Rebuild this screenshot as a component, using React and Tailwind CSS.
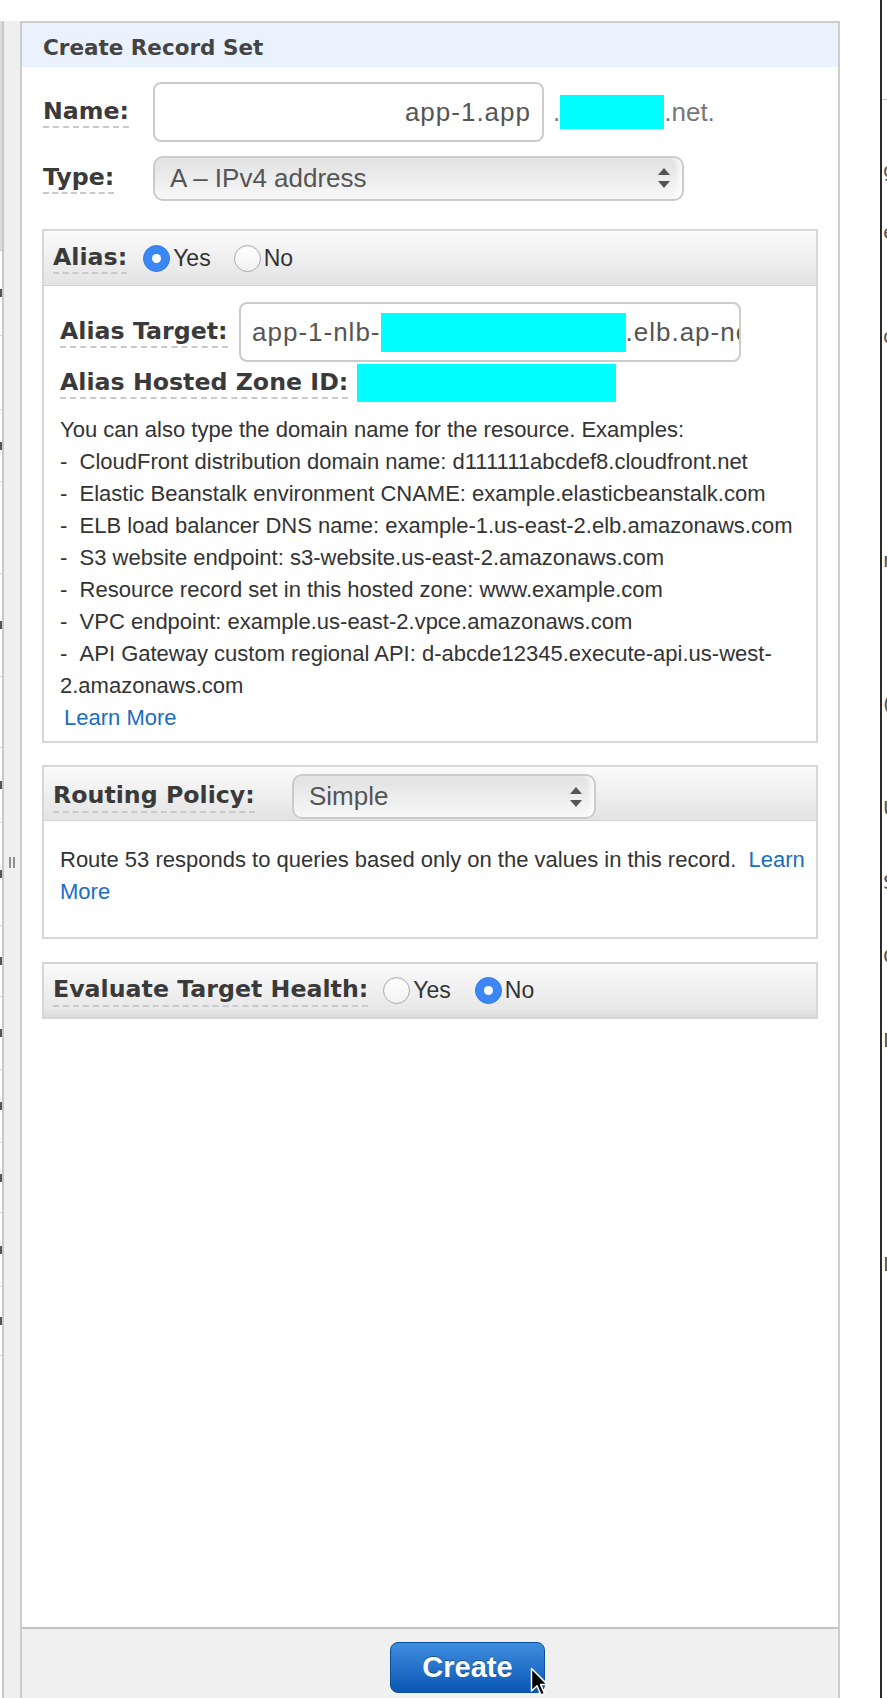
import React from "react";

function Label({ children }) {
  return (
    <span className="inline-block shrink-0 mt-[4px] whitespace-nowrap font-['DejaVu_Sans',Verdana,sans-serif] font-bold text-[23.7px] leading-none text-[#3a3a3a] pb-[3px] border-b-2 border-dashed border-[#c9c9c9]">
      {children}
    </span>
  );
}

function Radio({ checked }) {
  return checked ? (
    <span className="inline-flex shrink-0 w-[27px] h-[27px] rounded-full bg-[#3b87f5] border border-[#2f77e4] items-center justify-center">
      <span className="w-[9px] h-[9px] rounded-full bg-white" />
    </span>
  ) : (
    <span className="inline-block shrink-0 w-[27px] h-[27px] rounded-full bg-[linear-gradient(#ffffff,#f2f2f2)] border-[1.5px] border-[#ababab] shadow-[inset_0_1px_1px_rgba(0,0,0,0.08)]" />
  );
}

function Arrows() {
  return (
    <svg width="12" height="20" viewBox="0 0 12 20" className="shrink-0">
      <path d="M6 0 L12 7 L0 7 Z" fill="#555555" />
      <path d="M0 13 L12 13 L6 20 Z" fill="#555555" />
    </svg>
  );
}

function Select({ w, text }) {
  return (
    <div
      className={
        w +
        " h-[45px] shrink-0 rounded-[10px] border-2 border-[#cbcbcb] bg-[linear-gradient(#e1e1e1,#f8f8f8)] shadow-[inset_-6px_0_6px_-3px_#ffffff] flex items-center justify-between pl-[15px] pr-[12px] text-[26px] text-[#555555]"
      }
    >
      <span>{text}</span>
      <Arrows />
    </div>
  );
}

const HeaderBand =
  "bg-[linear-gradient(#fbfbfb,#e3e3e3)] border-b border-[#d2d2d2]";

function LeftStrip() {
  const rows = [
    { h: "h-[85px]", mark: true },
    { h: "h-[74px]", mark: false },
    { h: "h-[72px]", mark: true },
    { h: "h-[92px]", mark: false },
    { h: "h-[103px]", mark: true },
    { h: "h-[71px]", mark: false },
    { h: "h-[75px]", mark: true },
    { h: "h-[103px]", mark: true },
    { h: "h-[71px]", mark: true },
    { h: "h-[73px]", mark: true },
    { h: "h-[73px]", mark: true },
    { h: "h-[70px]", mark: true },
    { h: "h-[74px]", mark: true },
    { h: "h-[69px]", mark: true },
  ];
  return (
    <div className="w-[20px] shrink-0 flex flex-col">
      <div className="h-[21px] bg-white" />
      <div className="flex-1 flex">
        <div className="w-[2px] flex flex-col overflow-hidden">
          <div className="h-[230px] bg-[#dcdcdc] border-b border-[#cfcfcf]" />
          {rows.map((r, i) => (
            <div
              key={i}
              className={r.h + " bg-white border-b border-[#dddddd] flex items-center"}
            >
              {r.mark ? <div className="w-[2px] h-[8px] bg-[#555555]" /> : null}
            </div>
          ))}
        </div>
        <div className="w-[2px] bg-[#c8c8c8]" />
        <div className="flex-1 bg-[#efefef] pt-[836px] pl-[5px]">
          <div className="flex gap-[2px]">
            <div className="w-[2px] h-[11px] bg-[#8f8f8f]" />
            <div className="w-[2px] h-[11px] bg-[#8f8f8f]" />
          </div>
        </div>
      </div>
    </div>
  );
}

function RightEdge() {
  return (
    <div className="w-[5px] shrink-0 overflow-hidden flex flex-col bg-white font-['DejaVu_Sans',sans-serif] text-[20px] leading-[24px] text-[#555555]">
      <div className="h-[100px] border-b border-[#cccccc]" />
      <div className="mt-[58px] pl-[1px]">g</div>
      <div className="mt-[38px] pl-[1px]">e</div>
      <div className="mt-[80px] pl-[1px]">d</div>
      <div className="mt-[200px] pl-[1px]">n</div>
      <div className="mt-[120px] pl-[1px]">(</div>
      <div className="mt-[80px] pl-[1px]">U</div>
      <div className="mt-[50px] pl-[1px]">S</div>
      <div className="mt-[50px] pl-[1px]">C</div>
      <div className="mt-[60px] pl-[1px]">D</div>
      <div className="mt-[200px] pl-[1px]">L</div>
    </div>
  );
}

export default function App() {
  const body = "font-['Liberation_Sans',Arial,Helvetica,sans-serif]";
  const lines = [
    "CloudFront distribution domain name: d111111abcdef8.cloudfront.net",
    "Elastic Beanstalk environment CNAME: example.elasticbeanstalk.com",
    "ELB load balancer DNS name: example-1.us-east-2.elb.amazonaws.com",
    "S3 website endpoint: s3-website.us-east-2.amazonaws.com",
    "Resource record set in this hosted zone: www.example.com",
    "VPC endpoint: example.us-east-2.vpce.amazonaws.com",
  ];
  return (
    <div className={"w-[887px] h-[1698px] flex bg-white overflow-hidden " + body}>
      <LeftStrip />

      <div className="w-[820px] shrink-0 mt-[21px] h-[1677px] flex flex-col border-x-2 border-t-2 border-[#cdcdcd]">
        <div className="h-[44px] shrink-0 bg-[#eaf2fd] flex items-center pl-[21px] pt-[6px] font-['DejaVu_Sans',Verdana,sans-serif] font-bold text-[21.5px] text-[#444444]">
          Create Record Set
        </div>

        <div className="flex-1 flex flex-col bg-white pt-[15px] px-[20px]">
          {/* Name row */}
          <div className="flex items-center h-[60px]">
            <div className="w-[111px] shrink-0 pl-[1px] flex">
              <Label>Name:</Label>
            </div>
            <div className="w-[391px] h-[60px] shrink-0 rounded-[8px] border-2 border-[#cccccc] bg-white flex items-center justify-end pr-[11px] text-[26px] tracking-[1px] text-[#555555]">
              app-1.app
            </div>
            <span className="ml-[9px] text-[26px] text-[#777777]">.</span>
            <span className="w-[104px] h-[34px] shrink-0 bg-[#00ffff]" />
            <span className="text-[26px] text-[#777777]">.net.</span>
          </div>

          {/* Type row */}
          <div className="flex items-center h-[46px] mt-[13px]">
            <div className="w-[111px] shrink-0 pl-[1px] flex">
              <Label>Type:</Label>
            </div>
            <Select w="w-[531px]" text="A – IPv4 address" />
          </div>

          {/* Alias box */}
          <div className="mt-[28px] border-2 border-[#d6d6d6]">
            <div className={"h-[55px] flex items-center pl-[9px] " + HeaderBand}>
              <Label>Alias:</Label>
              <span className="ml-[16px] flex items-center">
                <Radio checked />
              </span>
              <span className="ml-[3px] text-[23px] text-[#333333]">Yes</span>
              <span className="ml-[23px] flex items-center">
                <Radio />
              </span>
              <span className="ml-[3px] text-[23px] text-[#333333]">No</span>
            </div>
            <div className="pt-[16px] pl-[16px] pr-[10px] pb-[7px]">
              <div className="flex items-center h-[60px]">
                <div className="w-[179px] shrink-0 flex">
                  <Label>Alias Target:</Label>
                </div>
                <div className="w-[502px] h-[60px] shrink-0 rounded-[8px] border-2 border-[#cccccc] bg-white flex items-center pl-[11px] overflow-hidden whitespace-nowrap text-[26px] tracking-[1px] text-[#555555]">
                  <span>app-1-nlb-</span>
                  <span className="inline-block w-[7px] overflow-hidden">5</span>
                  <span className="w-[245px] h-[39px] shrink-0 bg-[#00ffff]" />
                  <span>.elb.ap-northeast</span>
                </div>
              </div>
              <div className="flex items-center h-[38px] mt-[2px]">
                <Label>Alias Hosted Zone ID:</Label>
                <span className="ml-[9px] w-[259px] h-[38px] shrink-0 bg-[#00ffff]" />
              </div>
              <div className="mt-[12px] text-[22px] leading-[32px] text-[#333333]">
                <div>You can also type the domain name for the resource. Examples:</div>
                {lines.map((l) => (
                  <div key={l} className="whitespace-nowrap">
                    -{"\u00a0\u00a0"}
                    {l}
                  </div>
                ))}
                <div className="whitespace-nowrap">
                  -{"\u00a0\u00a0"}API Gateway custom regional API: d-abcde12345.execute-api.us-west-
                </div>
                <div>2.amazonaws.com</div>
                <div className="pl-[4px]">
                  <a className="text-[#1a6dc2]">Learn More</a>
                </div>
              </div>
            </div>
          </div>

          {/* Routing box */}
          <div className="mt-[22px] border-2 border-[#d6d6d6]">
            <div className={"pt-[7px] pb-[1px] " + HeaderBand}>
              <div className="flex items-center h-[45px] pl-[9px]">
                <div className="w-[239px] shrink-0 flex">
                  <Label>Routing Policy:</Label>
                </div>
                <Select w="w-[304px]" text="Simple" />
              </div>
            </div>
            <div className="pt-[23px] pb-[29px] pl-[16px] text-[22px] leading-[32px] text-[#333333]">
              <div className="whitespace-nowrap">
                Route 53 responds to queries based only on the values in this record.{"\u00a0 "}
                <a className="text-[#1a6dc2]">Learn</a>
              </div>
              <div>
                <a className="text-[#1a6dc2]">More</a>
              </div>
            </div>
          </div>

          {/* Evaluate box */}
          <div className="mt-[23px] border-2 border-[#d6d6d6]">
            <div className="h-[53px] flex items-center pl-[9px] bg-[linear-gradient(#fafafa_0%,#e8e8e8_85%,#dcdcdc_100%)]">
              <Label>Evaluate Target Health:</Label>
              <span className="ml-[15px] flex items-center">
                <Radio />
              </span>
              <span className="ml-[3px] text-[23px] text-[#333333]">Yes</span>
              <span className="ml-[24px] flex items-center">
                <Radio checked />
              </span>
              <span className="ml-[3px] text-[23px] text-[#333333]">No</span>
            </div>
          </div>
        </div>

        {/* Footer */}
        <div className="h-[71px] shrink-0 relative border-t-2 border-[#c2c2c2] bg-[#f0f0f0] pt-[13px] pl-[368px] flex items-start">
          <button className="w-[155px] h-[51px] rounded-[8px] border border-[#0b4f9c] bg-[linear-gradient(#3e8ee0,#0a57b3)] text-white font-bold text-[29px] leading-none [text-shadow:0_-1px_0_rgba(0,0,0,0.35)] flex items-center justify-center">
            Create
          </button>
          <svg
            width="22"
            height="32"
            viewBox="0 0 22 32"
            className="absolute left-[508px] top-[38px]"
          >
            <path
              d="M1.5 1.5 L1.5 24 L7 18.8 L11 28 L14.5 26.5 L10.6 17.6 L17.5 17.6 Z"
              fill="#000000"
              stroke="#ffffff"
              strokeWidth="1.5"
              strokeLinejoin="round"
            />
          </svg>
        </div>
      </div>

      <div className="w-[40px] shrink-0 bg-white" />
      <div className="w-[2px] shrink-0 bg-[#2a2a2a]" />
      <RightEdge />
    </div>
  );
}
